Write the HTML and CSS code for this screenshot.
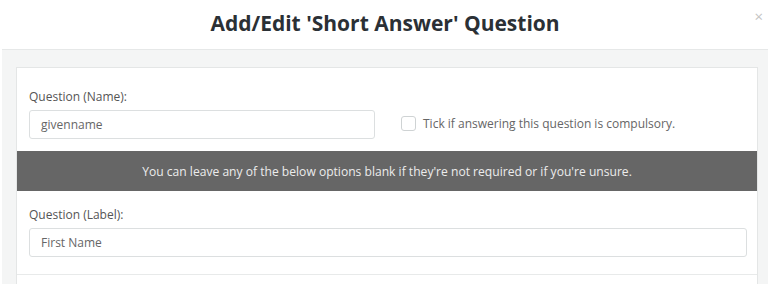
FILE: index.html
```html
<!DOCTYPE html>
<html>
<head>
<meta charset="utf-8">
<link rel="stylesheet" href="styles.css">
</head>
<body>
<div class="modal">
  <div class="modal-header">
    <h1 class="modal-title">Add/Edit 'Short Answer' Question</h1>
    <span class="close">×</span>
  </div>
  <div class="modal-body">
    <div class="panel">
      <div class="section first">
        <label class="field-label">Question (Name):</label>
        <div class="row">
          <div class="input name-input">givenname</div>
          <label class="check">
            <span class="box"></span>
            <span class="check-text">Tick if answering this question is compulsory.</span>
          </label>
        </div>
      </div>
      <div class="banner">You can leave any of the below options blank if they're not required or if you're unsure.</div>
      <div class="section second">
        <label class="field-label">Question (Label):</label>
        <div class="input wide-input">First Name</div>
      </div>
      <div class="section next"></div>
    </div>
  </div>
</div>
</body>
</html>
```
FILE: styles.css
```css
* { box-sizing: border-box; }
body {
  margin: 0;
  background: #fff;
  font-family: "Open Sans", "Liberation Sans", sans-serif;
  color: #555;
  overflow: hidden;
}
.modal { width: 768px; height: 284px; }
.modal-header {
  height: 50px;
  border-bottom: 1px solid #e6e8e8;
  display: flex;
  justify-content: center;
  align-items: center;
  position: relative;
  margin-left: 2px;
}
.modal-title {
  margin: 0;
  font-size: 21px;
  font-weight: 700;
  color: #2b3035;
  padding-bottom: 4px;
}
.close {
  position: absolute;
  right: 5px;
  top: 6px;
  font-size: 15px;
  color: #c4c4c4;
}
.modal-body {
  background: #f4f5f5;
  margin-left: 2px;
  padding: 17px 10px 0 14px;
  height: 234px;
}
.panel {
  background: #fff;
  border: 1px solid #e4e6e6;
  border-bottom: none;
  height: 217px;
}
.section { padding: 0 11px 0 12px; }
.section.first { padding-top: 20px; height: 83px; }
.section.second { padding-top: 15px; height: 83px; }
.section.next { border-top: 1px solid #e8eaea; height: 20px; }
.field-label {
  display: block;
  font-size: 12px;
  line-height: 18px;
  color: #555;
  margin-bottom: 4px;
}
.row { display: flex; align-items: center; }
.input {
  height: 29px;
  border: 1px solid #dcdfe0;
  border-radius: 3px;
  font-size: 12px;
  line-height: 27px;
  padding-left: 11px;
  color: #666;
}
.name-input { width: 346px; }
.wide-input { width: 718px; }
.check {
  display: flex;
  align-items: center;
  margin-left: 26px;
  margin-top: -3px;
}
.box {
  width: 15px;
  height: 15px;
  border: 1px solid #cfd3d4;
  border-radius: 3px;
  margin-right: 7px;
}
.check-text { font-size: 12px; color: #666; }
.banner {
  height: 40px;
  background: #666;
  color: #ececec;
  font-size: 12.1px;
  display: flex;
  align-items: center;
  justify-content: center;
}
```
